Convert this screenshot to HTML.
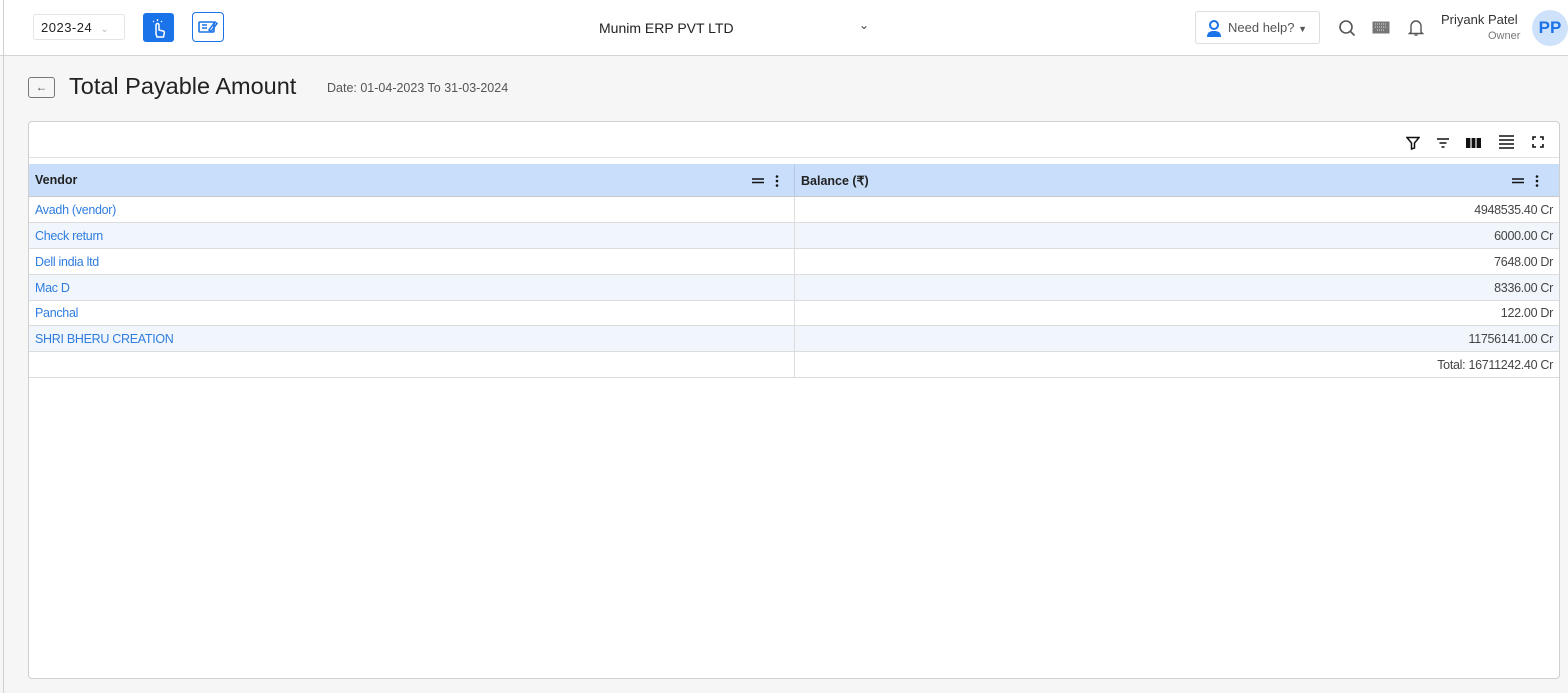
<!DOCTYPE html>
<html><head><style>
body{margin:0;width:1568px;height:693px;background:#f6f6f6;font-family:"Liberation Sans",sans-serif;position:relative;overflow:hidden;color:#222}
.hdr{position:absolute;left:0;top:0;width:1568px;height:55px;background:#fff;border-bottom:1px solid #d4d4d4}
.lb{position:absolute;left:3px;top:0;width:1px;height:693px;background:#d0d0d0}
.abs{position:absolute}
.card{position:absolute;left:28px;top:121px;width:1532px;height:558px;background:#fff;border:1px solid #cfcfcf;border-radius:4px;box-sizing:border-box}
.row{position:absolute;left:0;width:1530px;height:25px;border-bottom:1px solid #dcdcdc;font-size:12.5px;letter-spacing:-0.3px}
.row .a{position:absolute;left:6px;top:6px;color:#2f7de0}
.row .b{position:absolute;right:6px;top:6px;color:#444}
.row .sep{position:absolute;left:765px;top:0;width:1px;height:100%;background:#dcdcdc}
</style></head><body>
<div class="hdr"></div>
<div class="lb"></div>
<div class="abs" style="left:33px;top:14px;width:92px;height:26px;border:1px solid #e4e4e4;border-radius:3px;font-size:13px;box-sizing:border-box;padding:5px 7px;letter-spacing:0.5px">2023-24 <span style="color:#bbb;font-size:10px;margin-left:4px">&#8964;</span></div>
<div class="abs" style="left:143px;top:13px;width:31px;height:29px;background:#1a73e8;border-radius:3px">
<svg width="31" height="29" viewBox="0 0 31 29"><path d="M13 21v-9a1.5 1.5 0 013 0v5l4 1c1 .3 1.5 1 1.3 2l-.8 4H14z" fill="none" stroke="#fff" stroke-width="1.5"/><path d="M14.5 8V6M11 9l-1-1M18 9l1-1" stroke="#fff" stroke-width="1.2"/></svg></div>
<div class="abs" style="left:192px;top:12px;width:32px;height:30px;border:1px solid #1a73e8;border-radius:4px;box-sizing:border-box">
<svg width="30" height="28" viewBox="0 0 30 28"><rect x="6" y="9" width="15" height="10" rx="1" fill="none" stroke="#1a73e8" stroke-width="1.6"/><path d="M9 12h5M9 15h5M16 17l6-8 2 1.5-6 8z" stroke="#1a73e8" stroke-width="1.5" fill="none"/></svg></div>
<div class="abs" style="left:599px;top:20px;font-size:14px;color:#222">Munim ERP PVT LTD</div>
<div class="abs" style="left:859px;top:18px;font-size:12px;color:#444">&#8964;</div>
<div class="abs" style="left:1195px;top:11px;width:125px;height:33px;border:1px solid #ddd;border-radius:3px;box-sizing:border-box;font-size:13px;color:#555;padding:8px 0 0 32px">Need help? <span style="font-size:9px">&#9660;</span>
<svg class="abs" style="left:9px;top:7px" width="18" height="18" viewBox="0 0 18 18"><circle cx="9" cy="6" r="4" fill="none" stroke="#1a73e8" stroke-width="2"/><path d="M2 18c0-5 3-6 7-6s7 1 7 6z" fill="#1a73e8"/></svg></div>
<svg class="abs" style="left:1338px;top:19px" width="18" height="18" viewBox="0 0 18 18"><circle cx="8" cy="8" r="6" fill="none" stroke="#555" stroke-width="1.6"/><path d="M12.5 12.5l4 4" stroke="#555" stroke-width="1.6"/></svg>
<svg class="abs" style="left:1372px;top:21px" width="18" height="13" viewBox="0 0 18 13"><rect x="0.5" y="0.5" width="17" height="12" fill="#777"/><path d="M3 3h12M3 6h12M5 9h8" stroke="#ddd" stroke-width="1" stroke-dasharray="1 1"/></svg>
<svg class="abs" style="left:1408px;top:18px" width="16" height="19" viewBox="0 0 16 19"><path d="M3 14V8a5 5 0 0110 0v6l1.5 1.5h-13z" fill="none" stroke="#555" stroke-width="1.4"/><path d="M6.5 17h3" stroke="#555" stroke-width="1.4"/></svg>
<div class="abs" style="left:1441px;top:12px;font-size:13px;color:#333">Priyank Patel</div>
<div class="abs" style="left:1488px;top:30px;font-size:11px;color:#777">Owner</div>
<div class="abs" style="left:1532px;top:10px;width:36px;height:36px;border-radius:50%;background:#cfe2fb;color:#1a73e8;font-size:17px;font-weight:bold;line-height:36px;text-align:center">PP</div>
<div class="abs" style="left:28px;top:77px;width:27px;height:21px;border:1px solid #777;border-radius:3px;box-sizing:border-box;text-align:center;font-size:12px;line-height:18px;color:#555">&#8592;</div>
<div class="abs" style="left:69px;top:73px;font-size:23.5px;color:#222">Total Payable Amount</div>
<div class="abs" style="left:327px;top:81px;font-size:12.5px;color:#555">Date: 01-04-2023 To 31-03-2024</div>
<div class="card">
<div class="abs" style="left:0;top:35px;width:1530px;height:1px;background:#e2e2e2"></div>
<svg class="abs" style="left:1377px;top:14px" width="14" height="14" viewBox="0 0 14 14"><path d="M1 1.5h12L8.5 7v5L5.5 13V7z" fill="none" stroke="#111" stroke-width="1.5"/></svg>
<svg class="abs" style="left:1407px;top:14px" width="14" height="14" viewBox="0 0 14 14"><path d="M1 3h12M3.5 7h7M5.5 11h3" stroke="#111" stroke-width="1.5"/></svg>
<svg class="abs" style="left:1437px;top:15px" width="15" height="12" viewBox="0 0 15 12"><path d="M0 1h15v10H0z" fill="#111"/><path d="M5 1v10M10 1v10" stroke="#fff" stroke-width="1.2"/></svg>
<svg class="abs" style="left:1470px;top:12px" width="15" height="17" viewBox="0 0 15 17"><path d="M0 2h15M0 6h15M0 10h15M0 14h15" stroke="#111" stroke-width="1.5"/></svg>
<svg class="abs" style="left:1503px;top:14px" width="12" height="12" viewBox="0 0 12 12"><path d="M1 4V1h3M8 1h3v3M11 8v3H8M4 11H1V8" fill="none" stroke="#111" stroke-width="1.6"/></svg>
<div class="abs" style="left:0;top:42px;width:1530px;height:32px;background:#c8defa;border-bottom:1px solid #c8c8c8;font-size:12.5px;font-weight:bold;color:#222">
<span class="abs" style="left:6px;top:9px">Vendor</span>
<span class="abs" style="left:772px;top:9px">Balance (₹)</span>
<div class="abs" style="left:765px;top:0;width:1px;height:32px;background:#b7c8de"></div>
<svg class="abs" style="left:723px;top:10px" width="28" height="14" viewBox="0 0 28 14"><path d="M0 5h12M0 8.5h12" stroke="#111" stroke-width="1.6"/><circle cx="25" cy="2.5" r="1.3" fill="#111"/><circle cx="25" cy="7" r="1.3" fill="#111"/><circle cx="25" cy="11.5" r="1.3" fill="#111"/></svg>
<svg class="abs" style="left:1483px;top:10px" width="28" height="14" viewBox="0 0 28 14"><path d="M0 5h12M0 8.5h12" stroke="#111" stroke-width="1.6"/><circle cx="25" cy="2.5" r="1.3" fill="#111"/><circle cx="25" cy="7" r="1.3" fill="#111"/><circle cx="25" cy="11.5" r="1.3" fill="#111"/></svg>
</div>
<div class="row" style="top:75px"><span class="a">Avadh (vendor)</span><div class="sep"></div><span class="b">4948535.40 Cr</span></div>
<div class="row" style="top:101px;background:#f1f6fd"><span class="a">Check return</span><div class="sep"></div><span class="b">6000.00 Cr</span></div>
<div class="row" style="top:127px"><span class="a">Dell india ltd</span><div class="sep"></div><span class="b">7648.00 Dr</span></div>
<div class="row" style="top:153px;background:#f1f6fd"><span class="a">Mac D</span><div class="sep"></div><span class="b">8336.00 Cr</span></div>
<div class="row" style="top:178px"><span class="a">Panchal</span><div class="sep"></div><span class="b">122.00 Dr</span></div>
<div class="row" style="top:204px;background:#f1f6fd"><span class="a">SHRI BHERU CREATION</span><div class="sep"></div><span class="b">11756141.00 Cr</span></div>
<div class="row" style="top:230px"><div class="sep"></div><span class="b">Total: 16711242.40 Cr</span></div>
</div>
</body></html>
